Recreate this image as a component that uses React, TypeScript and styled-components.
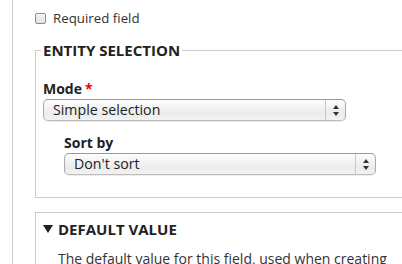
import styled, { createGlobalStyle } from "styled-components";

const GlobalStyle = createGlobalStyle`
    html, body {
        margin: 0;
        padding: 0;
        background: #fff;
        overflow: hidden;
    }
    body {
        font-family: "Open Sans", "DejaVu Sans", sans-serif;
        font-size: 13px;
        color: #333;
    }
`;

const Pane = styled.div`
    margin-left: 12px;
    border-left: 1px solid #ccc;
    min-height: 264px;
    padding: 8px 0 0 22px;
    box-sizing: border-box;
`;

const CheckRow = styled.label`
    display: flex;
    align-items: center;
    gap: 7px;
    height: 20px;
    font-size: 13.3px;
`;
const Box = styled.span`
    width: 9px;
    height: 9px;
    border: 1px solid #8a8a8a;
    border-radius: 2px;
    background: linear-gradient(#f4f4f4, #e2e2e2);
    box-shadow: inset 0 1px 0 #fff;
`;

const Fieldset = styled.fieldset`
    margin: 13px -30px 0 0;
    padding: 0 7px 22px 5px;
    border: 1px solid #ccc;
    min-width: 0;
`;
const Legend = styled.legend`
    padding: 0 2px;
    font-size: 15px;
    font-weight: bold;
    line-height: 18px;
    color: #222;
`;

const Item = styled.div<{ $indent?: number; $top: number }>`
    margin-left: ${p => (p.$indent ?? 0) + 2}px;
    margin-top: ${p => p.$top}px;
`;
const Label = styled.div`
    font-size: 14px;
    font-weight: bold;
    line-height: 19px;
    margin-bottom: 1px;
    color: #222;
`;
const Star = styled.span`
    color: #e00;
    margin-left: 3px;
`;

const Select = styled.div<{ $width: number }>`
    width: ${p => p.$width}px;
    height: 22px;
    box-sizing: border-box;
    border: 1px solid #aaa;
    border-top-color: #999;
    border-bottom-color: #bbb;
    border-radius: 5px;
    background: linear-gradient(#fdfdfd, #f1f1f1 45%, #ebebeb 70%, #f3f3f3);
    display: flex;
    align-items: center;
    box-shadow: 0 1px 1px rgba(0, 0, 0, 0.08);
`;
const Value = styled.span`
    flex: 1;
    padding-left: 9px;
    font-size: 14.2px;
    line-height: 20px;
    color: #222;
`;
const Arrows = styled.span`
    width: 19px;
    height: 100%;
    border-left: 1px solid #c8c8c8;
    display: flex;
    align-items: center;
    justify-content: center;
`;

const Details = styled.div`
    margin: 14px -30px 0 0;
    border: 1px solid #ccc;
    border-bottom: none;
    padding: 7px 8px 0 7px;
`;
const Summary = styled.div`
    display: flex;
    align-items: center;
    gap: 5px;
    font-size: 15px;
    font-weight: bold;
    line-height: 18px;
    color: #222;
`;
const Description = styled.p`
    margin: 12px 0 0 15px;
    font-size: 14px;
    line-height: 18px;
    white-space: nowrap;
`;

const SelectArrows = () => (
    <svg width="6" height="11" viewBox="0 0 6 11">
        <path d="M3 0 L6 4 L0 4 Z" fill="#333" />
        <path d="M0 7 L6 7 L3 11 Z" fill="#333" />
    </svg>
);

const FakeSelect = ({ value, width }: { value: string; width: number }) => (
    <Select $width={width}>
        <Value>{value}</Value>
        <Arrows>
            <SelectArrows />
        </Arrows>
    </Select>
);

const App = () => (
    <>
        <GlobalStyle />
        <Pane>
            <CheckRow>
                <Box />
                Required field
            </CheckRow>
            <Fieldset>
                <Legend>ENTITY SELECTION</Legend>
                <Item $top={20}>
                    <Label>
                        Mode<Star>*</Star>
                    </Label>
                    <FakeSelect value="Simple selection" width={303} />
                </Item>
                <Item $indent={21} $top={12}>
                    <Label>Sort by</Label>
                    <FakeSelect value="Don't sort" width={312} />
                </Item>
            </Fieldset>
            <Details>
                <Summary>
                    <svg width="10" height="8" viewBox="0 0 10 8">
                        <path d="M0 0 L10 0 L5 8 Z" fill="#222" />
                    </svg>
                    DEFAULT VALUE
                </Summary>
                <Description>The default value for this field, used when creating</Description>
            </Details>
        </Pane>
    </>
);

export default App;
